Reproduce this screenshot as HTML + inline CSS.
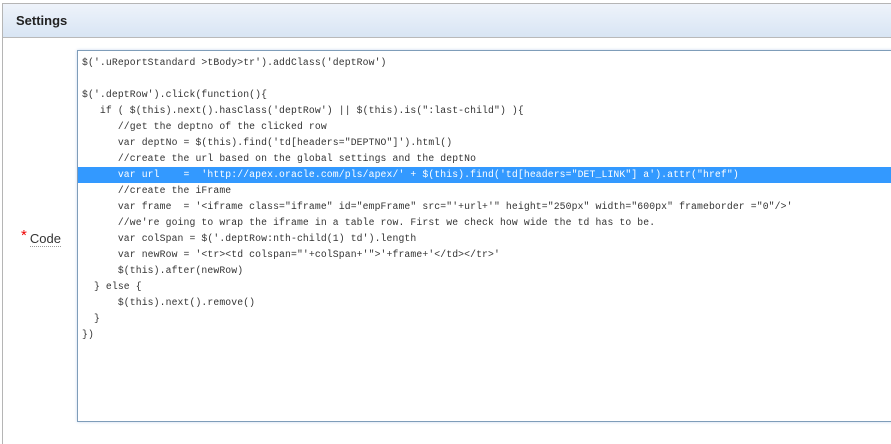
<!DOCTYPE html>
<html><head><style>
html,body{margin:0;padding:0;background:#fff;width:891px;height:437px;overflow:hidden;}
.wrap{position:absolute;left:2px;top:3px;width:895px;height:440px;border-left:1px solid #b5b5b5;border-top:1px solid #b5b5b5;}
.hdr{position:absolute;left:0;top:0;right:0;height:33px;background:linear-gradient(#eef3fa,#d8e5f4);border-bottom:1px solid #b9b9b9;}
.hdr span{position:absolute;left:13px;top:9px;font:bold 13px "Liberation Sans",sans-serif;color:#222;}
.lab{position:absolute;left:21px;top:230px;font:13px "Liberation Sans",sans-serif;color:#333;}
.lab b{color:#e00;font-weight:normal;font-size:15px;position:relative;top:-3px;margin-right:3px;}
.lab u{text-decoration:none;border-bottom:1px dotted #999;}
.ta{position:absolute;left:77px;top:50px;width:830px;height:370px;border:1px solid #7f9db9;box-shadow:0 0 3px #c9d9ee;background:#fff;}
pre{margin:0;position:absolute;left:4px;top:4px;font:9.75px/16px "Liberation Mono",monospace;letter-spacing:0.12px;color:#333;}
.hl{position:absolute;left:0;top:116px;width:900px;height:16px;background:#3399ff;}
.hl+pre .s{color:#fff}
</style></head><body>
<div class="wrap"><div class="hdr"><span>Settings</span></div></div>
<div class="lab"><b>*</b><u>Code</u></div>
<div class="ta"><div class="hl"></div><pre>$('.uReportStandard &gt;tBody&gt;tr').addClass('deptRow')

$('.deptRow').click(function(){
   if ( $(this).next().hasClass('deptRow') || $(this).is(":last-child") ){
      //get the deptno of the clicked row
      var deptNo = $(this).find('td[headers="DEPTNO"]').html()
      //create the url based on the global settings and the deptNo
<span class="s">      var url    =  'http://apex.oracle.com/pls/apex/' + $(this).find('td[headers="DET_LINK"] a').attr("href")</span>
      //create the iFrame
      var frame  = '&lt;iframe class="iframe" id="empFrame" src="'+url+'" height="250px" width="600px" frameborder ="0"/&gt;'
      //we're going to wrap the iframe in a table row. First we check how wide the td has to be.
      var colSpan = $('.deptRow:nth-child(1) td').length
      var newRow = '&lt;tr&gt;&lt;td colspan="'+colSpan+'"&gt;'+frame+'&lt;/td&gt;&lt;/tr&gt;'
      $(this).after(newRow)
  } else {
      $(this).next().remove()
  }
})</pre></div>
</body></html>
